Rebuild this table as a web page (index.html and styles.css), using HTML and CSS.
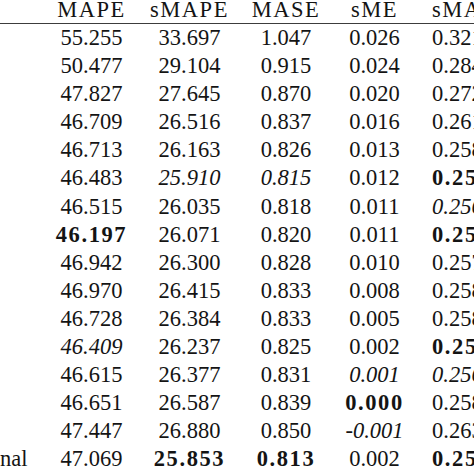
FILE: index.html
```html
<!DOCTYPE html>
<html lang="en">
<head>
<meta charset="utf-8">
<title>Forecast error table</title>
<link rel="stylesheet" href="styles.css">
</head>
<body>
<table class="results">
  <colgroup>
    <col class="c-label">
    <col class="c-mape">
    <col class="c-smape">
    <col class="c-mase">
    <col class="c-sme">
    <col class="c-last">
  </colgroup>
  <thead>
    <tr>
      <th class="label"></th>
      <th>MAPE</th>
      <th>sMAPE</th>
      <th>MASE</th>
      <th>sME</th>
      <th class="last">sMAPE</th>
    </tr>
  </thead>
  <tbody>
    <tr><td class="label"></td><td>55.255</td><td>33.697</td><td>1.047</td><td>0.026</td><td class="last">0.321</td></tr>
    <tr><td class="label"></td><td>50.477</td><td>29.104</td><td>0.915</td><td>0.024</td><td class="last">0.284</td></tr>
    <tr><td class="label"></td><td>47.827</td><td>27.645</td><td>0.870</td><td>0.020</td><td class="last">0.272</td></tr>
    <tr><td class="label"></td><td>46.709</td><td>26.516</td><td>0.837</td><td>0.016</td><td class="last">0.261</td></tr>
    <tr><td class="label"></td><td>46.713</td><td>26.163</td><td>0.826</td><td>0.013</td><td class="last">0.258</td></tr>
    <tr><td class="label"></td><td>46.483</td><td><i>25.910</i></td><td><i>0.815</i></td><td>0.012</td><td class="last"><b>0.255</b></td></tr>
    <tr><td class="label"></td><td>46.515</td><td>26.035</td><td>0.818</td><td>0.011</td><td class="last"><i>0.256</i></td></tr>
    <tr><td class="label"></td><td><b>46.197</b></td><td>26.071</td><td>0.820</td><td>0.011</td><td class="last"><b>0.255</b></td></tr>
    <tr><td class="label"></td><td>46.942</td><td>26.300</td><td>0.828</td><td>0.010</td><td class="last">0.257</td></tr>
    <tr><td class="label"></td><td>46.970</td><td>26.415</td><td>0.833</td><td>0.008</td><td class="last">0.258</td></tr>
    <tr><td class="label"></td><td>46.728</td><td>26.384</td><td>0.833</td><td>0.005</td><td class="last">0.258</td></tr>
    <tr><td class="label"></td><td><i>46.409</i></td><td>26.237</td><td>0.825</td><td>0.002</td><td class="last"><b>0.255</b></td></tr>
    <tr><td class="label"></td><td>46.615</td><td>26.377</td><td>0.831</td><td><i>0.001</i></td><td class="last"><i>0.256</i></td></tr>
    <tr><td class="label"></td><td>46.651</td><td>26.587</td><td>0.839</td><td><b>0.000</b></td><td class="last">0.258</td></tr>
    <tr><td class="label"></td><td>47.447</td><td>26.880</td><td>0.850</td><td><i>-0.001</i></td><td class="last">0.263</td></tr>
    <tr><td class="label">nal</td><td>47.069</td><td><b>25.853</b></td><td><b>0.813</b></td><td>0.002</td><td class="last"><b>0.255</b></td></tr>
  </tbody>
</table>
</body>
</html>
```

FILE: styles.css
```css
html, body {
  margin: 0;
  padding: 0;
  background: #ffffff;
  overflow: hidden;
}

body {
  width: 474px;
  height: 474px;
}

.results {
  border-collapse: separate;
  border-spacing: 0;
  table-layout: fixed;
  width: 507px;
  font-family: "Liberation Serif", "Times New Roman", serif;
  font-size: 22.5px;
  color: #141414;
}

.c-label { width: 44px; }
.c-mape  { width: 95px; }
.c-smape { width: 101px; }
.c-mase  { width: 92px; }
.c-sme   { width: 85px; }
.c-last  { width: 90px; }

.results th,
.results td {
  padding: 0;
  text-align: center;
  white-space: nowrap;
}

.results th {
  font-weight: normal;
  line-height: 20px;
  padding-bottom: 3px;
  letter-spacing: 1.5px;
  border-bottom: 1px solid #3c3c3c;
}

.results td {
  line-height: 28.1px;
}

.results .label {
  text-align: left;
}

.results th.last,
.results td.last {
  text-align: left;
  padding-left: 15px;
}

.results b {
  font-weight: bold;
  letter-spacing: 1.6px;
}

.results i {
  font-style: italic;
}
```
